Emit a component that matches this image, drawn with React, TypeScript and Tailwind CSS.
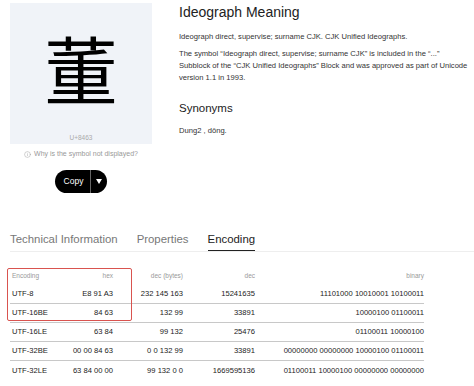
import { Info } from "lucide-react";

const rows = [
  { enc: "UTF-8", hex: "E8 91 A3", bytes: "232 145 163", dec: "15241635", bin: "11101000 10010001 10100011" },
  { enc: "UTF-16BE", hex: "84 63", bytes: "132 99", dec: "33891", bin: "10000100 01100011" },
  { enc: "UTF-16LE", hex: "63 84", bytes: "99 132", dec: "25476", bin: "01100011 10000100" },
  { enc: "UTF-32BE", hex: "00 00 84 63", bytes: "0 0 132 99", dec: "33891", bin: "00000000 00000000 10000100 01100011" },
  { enc: "UTF-32LE", hex: "63 84 00 00", bytes: "99 132 0 0", dec: "1669595136", bin: "01100011 10000100 00000000 00000000" },
];

export default function App() {
  return (
    <div className="w-[474px] h-[386px] overflow-hidden bg-white font-['Liberation_Sans',Arial,sans-serif] text-[#222]">
      {/* top */}
      <div className="flex pl-[10px] pt-[3px]">
        <div className="w-[142px] flex flex-col items-center">
          <div className="w-[142px] h-[141px] bg-[#f0f3f8] flex flex-col items-center">
            <div className="mt-[20px] h-[88px] text-[74px] leading-[88px] text-black font-['Noto_Sans_CJK_SC',serif]">董</div>
            <div className="mt-[22px] text-[6.5px] text-[#aaa]">U+8463</div>
          </div>
          <div className="mt-[5px] flex items-center gap-[3px] text-[7px] text-[#999]">
            <Info size={7} strokeWidth={1.5} />
            <span>Why is the symbol not displayed?</span>
          </div>
          <div className="mt-[10px] h-[23px] w-[52px] rounded-full bg-black text-white flex items-center">
            <span className="w-[35px] text-center text-[8.5px] pl-[2px]">Copy</span>
            <span className="w-px h-[23px] bg-[#666]" />
            <span className="flex-1 flex justify-center">
              <svg width="6" height="5" viewBox="0 0 6 5"><path d="M0 0h6L3 5z" fill="#fff" /></svg>
            </span>
          </div>
        </div>

        <div className="ml-[27px] w-[295px]">
          <h1 className="text-[14px] leading-[18px]">Ideograph Meaning</h1>
          <p className="mt-[10px] text-[7.6px] leading-[12px] text-[#333]">Ideograph direct, supervise; surname CJK. CJK Unified Ideographs.</p>
          <p className="mt-[5px] text-[7.6px] leading-[12px] text-[#333] whitespace-nowrap">
            The symbol “Ideograph direct, supervise; surname CJK” is included in the “...”<br />
            Subblock of the “CJK Unified Ideographs” Block and was approved as part of Unicode<br />
            version 1.1 in 1993.
          </p>
          <h2 className="mt-[16px] text-[11.5px] leading-[16px]">Synonyms</h2>
          <p className="mt-[9px] text-[7.6px] leading-[12px] text-[#333]">Dung2 , dông.</p>
        </div>
      </div>

      {/* tabs */}
      <div className="mt-[38px] ml-[10px] flex gap-[19px] border-b border-[#eee] text-[11.4px] leading-[16px]">
        <div className="pb-[4px] text-[#777]">Technical Information</div>
        <div className="pb-[4px] text-[#777]">Properties</div>
        <div className="pb-[3px] text-[#222] border-b-[1.5px] border-[#222]">Encoding</div>
      </div>

      {/* table */}
      <div className="relative mt-[16px] ml-[10px] w-[414px]">
        <table className="w-[414px] table-fixed border-collapse text-[7.6px]">
          <colgroup>
            <col className="w-[50px]" />
            <col className="w-[53px]" />
            <col className="w-[70px]" />
            <col className="w-[72px]" />
            <col />
          </colgroup>
          <thead>
            <tr className="h-[17px] text-[#999] text-[6.5px]">
              <th className="pl-[2px] text-left font-normal">Encoding</th>
              <th className="text-right font-normal">hex</th>
              <th className="text-right font-normal">dec (bytes)</th>
              <th className="text-right font-normal">dec</th>
              <th className="text-right font-normal">binary</th>
            </tr>
          </thead>
          <tbody>
            {rows.map((r, i) => (
              <tr key={r.enc} className={"h-[19px] " + (i < rows.length - 1 ? "border-b border-[#c8c8c8]" : "")}>
                <td className="pl-[2px]">{r.enc}</td>
                <td className="text-right">{r.hex}</td>
                <td className="text-right">{r.bytes}</td>
                <td className="text-right">{r.dec}</td>
                <td className="text-right">{r.bin}</td>
              </tr>
            ))}
          </tbody>
        </table>
        <div className="absolute left-[-3px] top-0 w-[125px] h-[53px] border-solid border-[length:1.5px] border-[color:#d9534f] rounded-[2px]" />
      </div>
    </div>
  );
}
